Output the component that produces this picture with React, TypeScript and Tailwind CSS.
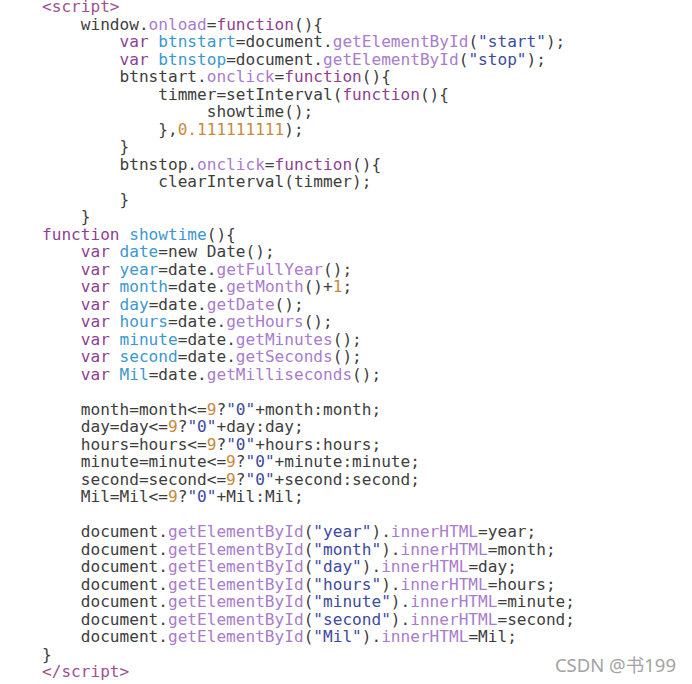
import React from 'react';

const colors: Record<string, string> = {
  t: 'text-[#a0508f]',
  k: 'text-[#8e3f91]',
  v: 'text-[#3b97cf]',
  m: 'text-[#a97ccd]',
  s: 'text-[#3c4aa0]',
  n: 'text-[#c98a3c]',
};

const code = [
  '[t|<script>]',
  '    window.[m|onload]=[k|function](){',
  '        [k|var] [v|btnstart]=document.[m|getElementById]([s|"start"]);',
  '        [k|var] [v|btnstop]=document.[m|getElementById]([s|"stop"]);',
  '        btnstart.[m|onclick]=[k|function](){',
  '            timmer=setInterval([k|function](){',
  '                 showtime();',
  '            },[n|0.111111111]);',
  '        }',
  '        btnstop.[m|onclick]=[k|function](){',
  '            clearInterval(timmer);',
  '        }',
  '    }',
  '[k|function] [v|showtime](){',
  '    [k|var] [v|date]=new Date();',
  '    [k|var] [v|year]=date.[m|getFullYear]();',
  '    [k|var] [v|month]=date.[m|getMonth]()+[n|1];',
  '    [k|var] [v|day]=date.[m|getDate]();',
  '    [k|var] [v|hours]=date.[m|getHours]();',
  '    [k|var] [v|minute]=date.[m|getMinutes]();',
  '    [k|var] [v|second]=date.[m|getSeconds]();',
  '    [k|var] [v|Mil]=date.[m|getMilliseconds]();',
  '',
  '    month=month<=[n|9]?[s|"0"]+month:month;',
  '    day=day<=[n|9]?[s|"0"]+day:day;',
  '    hours=hours<=[n|9]?[s|"0"]+hours:hours;',
  '    minute=minute<=[n|9]?[s|"0"]+minute:minute;',
  '    second=second<=[n|9]?[s|"0"]+second:second;',
  '    Mil=Mil<=[n|9]?[s|"0"]+Mil:Mil;',
  '',
  '    document.[m|getElementById]([s|"year"]).[m|innerHTML]=year;',
  '    document.[m|getElementById]([s|"month"]).[m|innerHTML]=month;',
  '    document.[m|getElementById]([s|"day"]).[m|innerHTML]=day;',
  '    document.[m|getElementById]([s|"hours"]).[m|innerHTML]=hours;',
  '    document.[m|getElementById]([s|"minute"]).[m|innerHTML]=minute;',
  '    document.[m|getElementById]([s|"second"]).[m|innerHTML]=second;',
  '    document.[m|getElementById]([s|"Mil"]).[m|innerHTML]=Mil;',
  '}',
  '[t|</script>]',
];

function Line({ src }: { src: string }) {
  const parts = src.split(/\[(\w)\|([^\]]*)\]/);
  const out: React.ReactNode[] = [];
  for (let i = 0; i < parts.length; i += 3) {
    if (parts[i]) out.push(<span key={i}>{parts[i]}</span>);
    if (i + 2 < parts.length) {
      out.push(
        <span key={i + 1} className={colors[parts[i + 1]]}>
          {parts[i + 2]}
        </span>
      );
    }
  }
  return <div className="h-[17.5px] whitespace-pre">{out.length ? out : ' '}</div>;
}

export default function App() {
  return (
    <div className="relative w-[692px] h-[684px] overflow-hidden bg-white">
      <div className="mt-[-2px] pl-[42px] font-['DejaVu_Sans_Mono',monospace] text-[16.1px] leading-[17.5px] text-[#3d3d3d]">
        {code.map((l, i) => (
          <Line key={i} src={l} />
        ))}
      </div>
      <div className="absolute right-[16px] bottom-[8px] font-['Noto_Sans','Noto_Sans_CJK_SC',sans-serif] text-[18.5px] leading-[22px] text-[#a3a3a3]">
        CSDN @书199
      </div>
    </div>
  );
}
